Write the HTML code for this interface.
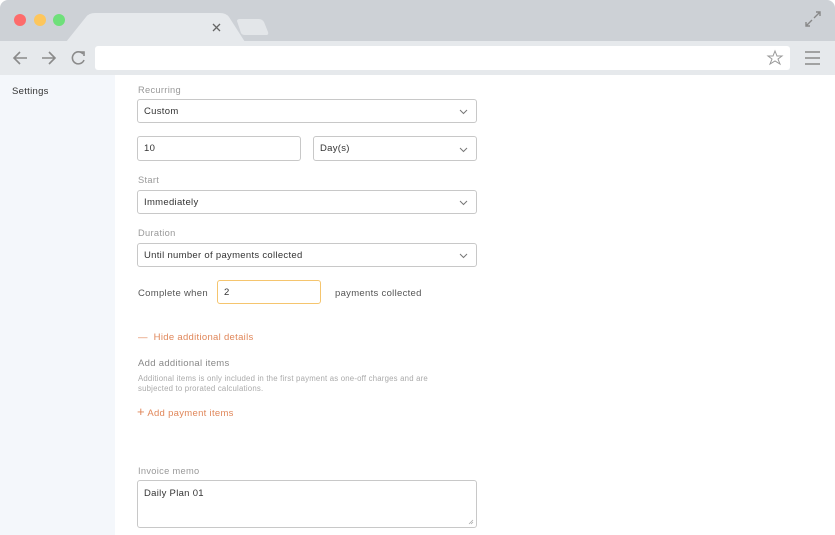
<!DOCTYPE html>
<html><head><meta charset="utf-8"><style>
*{margin:0;padding:0;box-sizing:border-box}
body{width:835px;height:535px;overflow:hidden;background:#fff;font-family:"Liberation Sans",sans-serif;position:relative}
.a{position:absolute}
.lbl{position:absolute;font-size:9.3px;color:#999;letter-spacing:.3px}
.box{position:absolute;border:1px solid #c8c8c8;border-radius:3px;background:#fff;font-size:9.5px;color:#333;padding-left:6px;display:flex;align-items:center;letter-spacing:.3px}
.chev{position:absolute;right:8px;top:50%;margin-top:-2px}
.or{color:#e0875a;font-size:9.5px;letter-spacing:.3px}
</style></head><body>
<div class="a" style="left:0;top:0;width:835px;height:42px;background:#cdd1d6;border-radius:8px 8px 0 0"></div>
<svg class="a" style="left:0;top:0" width="835" height="42">
<path d="M66 42 L86 17 Q89 13 95 13 L220 13 Q226 13 229 17 L245 42 Z" fill="#e6e9ec"/>
<path d="M237 21 Q237 19 240 19 L259 19 Q262 19 264 22 L268 32 Q269 35 266 35 L245 35 Q242 35 241 33 Z" fill="#e3e6e9"/>
<circle cx="20" cy="20" r="6" fill="#fd6b6b"/><circle cx="40" cy="20" r="6" fill="#fdc65c"/><circle cx="59" cy="20" r="6" fill="#6ee07a"/>
<path d="M213 24 L220 31 M220 24 L213 31" stroke="#666" stroke-width="1.3"/>
<path d="M806 26 L812 20 M806 22 V26 H810 M814 18 L820 12 M816 12 H820 V16" stroke="#888" stroke-width="1.4" fill="none"/>
</svg>
<div class="a" style="left:0;top:41px;width:835px;height:34px;background:#e6e9ec"></div>
<div class="a" style="left:95px;top:46px;width:695px;height:24px;background:#fff;border-radius:3px"></div>
<svg class="a" style="left:0;top:41px" width="835" height="34">
<g stroke="#8a8a8a" stroke-width="1.6" fill="none">
<path d="M27 17 H14 M20 11 L14 17 L20 23"/>
<path d="M42 17 H55 M49 11 L55 17 L49 23"/>
<path d="M83 13 A6 6 0 1 0 84 19"/><path d="M80 11 H84 V15"/>
<path d="M805 11 H820 M805 17 H820 M805 23 H820"/>
</g>
<path d="M775 10 L777 15 L782 15 L778 18 L780 23 L775 20 L770 23 L772 18 L768 15 L773 15 Z" stroke="#999" stroke-width="1" fill="none"/>
</svg>
<div class="a" style="left:0;top:75px;width:115px;height:460px;background:#f4f7fb"></div>
<div class="a" style="left:12px;top:86px;font-size:9.5px;color:#333;letter-spacing:.3px">Settings</div>

<div class="lbl" style="left:138px;top:85px">Recurring</div>
<div class="box" style="left:137px;top:99px;width:340px;height:24px">Custom<svg class="chev" width="9" height="6"><path d="M1 1 L4.5 4.5 L8 1" stroke="#777" fill="none"/></svg></div>
<div class="box" style="left:137px;top:136px;width:164px;height:25px">10</div>
<div class="box" style="left:313px;top:136px;width:164px;height:25px">Day(s)<svg class="chev" width="9" height="6"><path d="M1 1 L4.5 4.5 L8 1" stroke="#777" fill="none"/></svg></div>
<div class="lbl" style="left:138px;top:175px">Start</div>
<div class="box" style="left:137px;top:190px;width:340px;height:24px">Immediately<svg class="chev" width="9" height="6"><path d="M1 1 L4.5 4.5 L8 1" stroke="#777" fill="none"/></svg></div>
<div class="lbl" style="left:138px;top:228px">Duration</div>
<div class="box" style="left:137px;top:243px;width:340px;height:24px">Until number of payments collected<svg class="chev" width="9" height="6"><path d="M1 1 L4.5 4.5 L8 1" stroke="#777" fill="none"/></svg></div>
<div class="a" style="left:138px;top:288px;font-size:9.5px;color:#555;letter-spacing:.3px">Complete when</div>
<div class="box" style="left:217px;top:280px;width:104px;height:24px;border-color:#f5c56e">2</div>
<div class="a" style="left:335px;top:288px;font-size:9.5px;color:#555;letter-spacing:.3px">payments collected</div>
<div class="a or" style="left:138px;top:332px">— &nbsp;Hide additional details</div>
<div class="a" style="left:138px;top:358px;font-size:9.5px;color:#888;letter-spacing:.3px">Add additional items</div>
<div class="a" style="left:138px;top:374px;font-size:7.8px;color:#aaa;line-height:10px;width:295px;letter-spacing:.2px">Additional items is only included in the first payment as one-off charges and are subjected to prorated calculations.</div>
<div class="a or" style="left:137px;top:407px"><span style="font-size:13px;line-height:9px">+</span> Add payment items</div>
<div class="lbl" style="left:138px;top:466px">Invoice memo</div>
<div class="box" style="left:137px;top:480px;width:340px;height:48px;align-items:flex-start;padding-top:7px">Daily Plan 01
<svg class="a" style="right:2px;bottom:2px" width="6" height="6"><path d="M5 1 L1 5 M5 3 L3 5" stroke="#aaa" stroke-width=".8"/></svg></div>
</body></html>
